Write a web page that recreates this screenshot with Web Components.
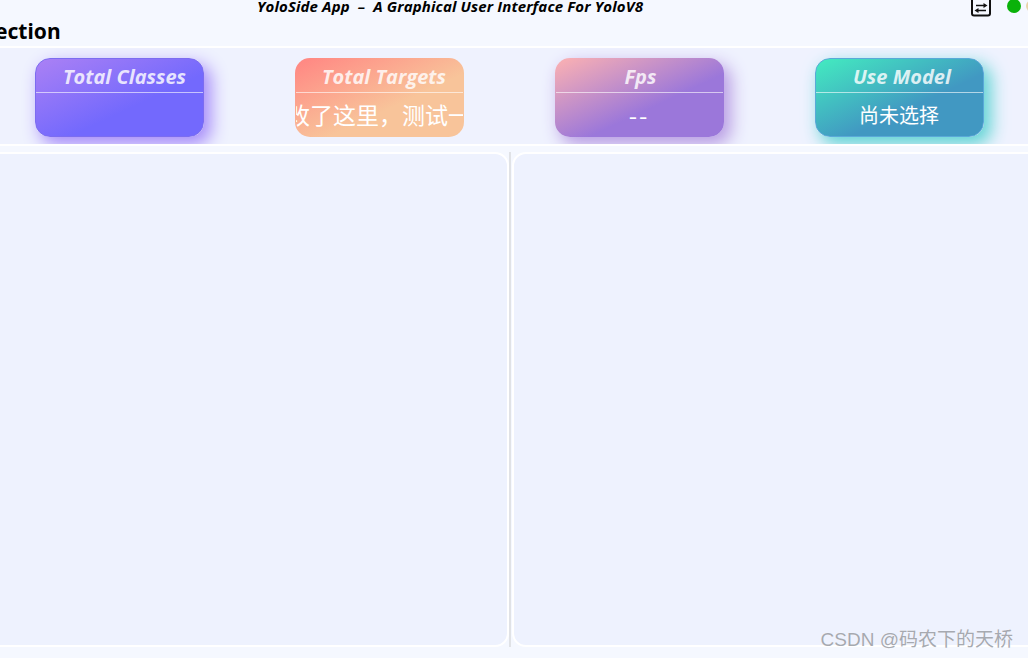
<!DOCTYPE html>
<html lang="en">
  <head>
    <meta charset="UTF-8" />
    <title>YoloSide App</title>
    <style>
      html, body { margin: 0; height: 100%; overflow: hidden; background: #f5f8ff; }
      body { font-family: "Open Sans", "Noto Sans CJK SC", sans-serif; }
    </style>
  </head>
  <body>
    <yolo-app>
      <top-bar slot="top" heading="YoloSide App  –  A Graphical User Interface For YoloV8" label="ection"></top-bar>
      <stat-row slot="stats">
        <stat-card title="Total Classes" shift="11" c1="#a77ff5" c2="#7369fd" glow="#a68bf9" edge="#7c6cf0"></stat-card>
        <stat-card title="Total Targets" shift="10" value="改了这里，测试一" size="23" c1="#ff8a84" c2="#f8c49a" glow="transparent" edge="transparent"></stat-card>
        <stat-card title="Fps" shift="3" value="--" size="24" gap="2" c1="#f5adb5" c2="#9b77da" glow="#b89ce3" edge="transparent"></stat-card>
        <stat-card title="Use Model" shift="6" value="尚未选择" size="20" c1="#43e6c0" c2="#4198c2" glow="#5fd4d4" edge="#5aa9d8"></stat-card>
      </stat-row>
      <view-panel slot="left"></view-panel>
      <view-panel slot="right"></view-panel>
    </yolo-app>
    <script>
      class YoloApp extends HTMLElement {
        constructor() {
          super();
          this.attachShadow({ mode: "open" });
          this.shadowRoot.innerHTML = `
            <style>
              :host { display: flex; flex-direction: column; height: 658px; overflow: hidden; position: relative; }
              .top { height: 46px; flex: none; }
              .stats { height: 96px; flex: none; border-top: 2px solid #fff; border-bottom: 2px solid #fff; background: #eff2fe; overflow: hidden; }
              .views { flex: none; height: 495px; margin-top: 6px; display: flex; margin-left: -20px; margin-right: -13px; }
              .views ::slotted(view-panel) { flex: 1; }
              .split { width: 2px; margin-right: 1px; background: #e0e2e6; flex: none; }
              .mark {
                position: absolute; right: 15px; top: 624px;
                font: 19px "Liberation Sans", "Noto Sans CJK SC", sans-serif;
                color: #a6a9b0; text-shadow: 0 0 1px #fff;
              }
            </style>
            <div class="top"><slot name="top"></slot></div>
            <div class="stats"><slot name="stats"></slot></div>
            <div class="views">
              <slot name="left"></slot>
              <div class="split"></div>
              <slot name="right"></slot>
            </div>
            <div class="mark">CSDN @码农下的天桥</div>
          `;
        }
      }

      class TopBar extends HTMLElement {
        constructor() {
          super();
          this.attachShadow({ mode: "open" });
          this.shadowRoot.innerHTML = `
            <style>
              :host { display: block; height: 46px; position: relative; overflow: hidden; color: #000; }
              .head {
                display: flex; justify-content: center; margin: -1px 0 0 -128px;
                font: italic 700 15px/14px "Open Sans", sans-serif; white-space: pre; letter-spacing: .13px;
              }
              .label { font: 700 21px/26px "Noto Sans", sans-serif; margin: 5px 0 0 -5px; }
              .tools { position: absolute; top: -2px; left: 970px; display: flex; align-items: flex-start; gap: 15px; }
              .dot { width: 14px; height: 14px; border-radius: 50%; background: #0ab20a; flex: none; margin-top: 1px; }
              .dot2 { width: 12px; height: 12px; border-radius: 50%; background: #e8d3a8; flex: none; margin: 2px 0 0 -10px; }
            </style>
            <div class="head"></div>
            <div class="label"></div>
            <div class="tools">
              <svg width="22" height="19" viewBox="0 0 22 19" fill="none" stroke="#111" stroke-width="2">
                <rect x="2" y="-4" width="18" height="21.500" rx="2"/>
                <path d="M6 7.500h9M16 12.500h-9" stroke-width="1.500"/>
                <path d="M13.500 5l4 2.500-4 2.500zM8.500 10l-4 2.500 4 2.500z" fill="#111" stroke="none"/>
              </svg>
              <div class="dot"></div>
              <div class="dot2"></div>
            </div>
          `;
          this.shadowRoot.querySelector(".head").textContent = this.getAttribute("heading");
          this.shadowRoot.querySelector(".label").textContent = this.getAttribute("label");
        }
      }

      class StatRow extends HTMLElement {
        constructor() {
          super();
          this.attachShadow({ mode: "open" });
          this.shadowRoot.innerHTML = `
            <style>
              :host { display: grid; grid-template-columns: repeat(4, 260px); margin-left: -11px; padding-top: 10px; }
            </style>
            <slot></slot>
          `;
        }
      }

      class StatCard extends HTMLElement {
        constructor() {
          super();
          this.attachShadow({ mode: "open" });
          const c1 = this.getAttribute("c1");
          const c2 = this.getAttribute("c2");
          const glow = this.getAttribute("glow");
          const edge = this.getAttribute("edge");
          const shift = this.getAttribute("shift") || 0;
          const size = this.getAttribute("size") || 20;
          const gap = this.getAttribute("gap") || 0;
          this.shadowRoot.innerHTML = `
            <style>
              :host { display: flex; justify-content: center; }
              .wrap { border-radius: 15px; box-shadow: 6px 7px 17px 1px ${glow}; }
              .card {
                width: 169px; height: 79px; box-sizing: border-box; border-radius: 15px; overflow: hidden;
                background: linear-gradient(to bottom right, ${c1} 5%, ${c2} 60%) border-box;
                border: 1px solid ${edge};
              }
              .title {
                height: 33px; border-bottom: 1px solid rgba(255,255,255,.6);
                font: italic 700 20px/36px "Open Sans", sans-serif; text-align: center; padding-left: ${shift}px;
                color: rgba(255,255,255,.82); white-space: nowrap;
              }
              .value {
                height: 44px; display: flex; justify-content: center; white-space: nowrap; overflow: hidden;
                font: 400 ${size}px/43px "Noto Sans CJK SC", sans-serif; color: #fff; letter-spacing: ${gap}px;
              }
            </style>
            <div class="wrap">
              <div class="card">
                <div class="title"></div>
                <div class="value"></div>
              </div>
            </div>
          `;
          this.shadowRoot.querySelector(".title").textContent = this.getAttribute("title");
          this.shadowRoot.querySelector(".value").textContent = this.getAttribute("value") || "";
        }
      }

      class ViewPanel extends HTMLElement {
        constructor() {
          super();
          this.attachShadow({ mode: "open" });
          this.shadowRoot.innerHTML = `
            <style>
              :host { display: block; box-sizing: border-box; background: #eef2fe; border: 2px solid #fff; border-radius: 14px; }
            </style>
          `;
        }
      }

      customElements.define("yolo-app", YoloApp);
      customElements.define("top-bar", TopBar);
      customElements.define("stat-row", StatRow);
      customElements.define("stat-card", StatCard);
      customElements.define("view-panel", ViewPanel);
    </script>
  </body>
</html>
